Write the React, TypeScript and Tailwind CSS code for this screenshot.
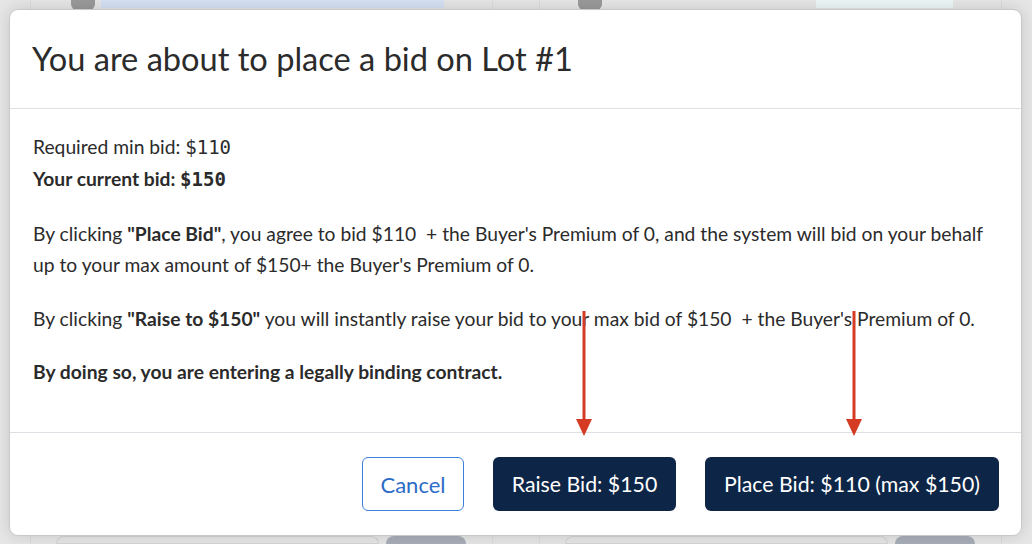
import React from "react";

const sans = { fontFamily: "Lato, 'Noto Sans', sans-serif" };
const mono = { fontFamily: "'DejaVu Sans Mono', monospace" };

function Arrow() {
  return (
    <svg width="20" height="126" viewBox="0 0 20 126" className="block">
      <line x1="10" y1="0" x2="10" y2="110" stroke="#d53a22" strokeWidth="3" />
      <polygon points="2,108 18,108 10,125" fill="#d53a22" />
    </svg>
  );
}

export default function App() {
  return (
    <div className="relative w-[1032px] h-[544px] overflow-hidden bg-[#e6e6e6]" style={sans}>
      {/* backdrop page */}
      <div className="grid grid-cols-2 gap-[46px] px-[30px] h-full">
        <div className="flex flex-col border-x border-[#dcdcdc] h-full">
          <div className="flex items-start gap-[6px] pl-[40px] pr-[48px]">
            <div className="w-[24px] h-[14px] rounded-b-md bg-[#9a9a9a] mt-[-4px]" />
            <div className="flex-1 h-[8px] bg-[#d5e2f4]" />
          </div>
          <div className="flex-1" />
          <div className="flex items-end gap-[7px] pl-[25px] pr-[26px]">
            <div className="flex-1 h-[8px] rounded-t-lg border border-[#d4d4d4]" />
            <div className="w-[80px] h-[8px] rounded-t-xl bg-[#a8aeb8]" />
          </div>
        </div>
        <div className="flex flex-col border-x border-[#dcdcdc] h-full">
          <div className="flex items-start pl-[38px] pr-[48px]">
            <div className="w-[24px] h-[14px] rounded-b-md bg-[#9a9a9a] mt-[-4px]" />
            <div className="flex-1" />
            <div className="w-[137px] h-[8px] bg-[#eef7f7]" />
          </div>
          <div className="flex-1" />
          <div className="flex items-end gap-[7px] pl-[25px] pr-[26px]">
            <div className="flex-1 h-[8px] rounded-t-lg border border-[#d4d4d4]" />
            <div className="w-[80px] h-[8px] rounded-t-xl bg-[#a8aeb8]" />
          </div>
        </div>
      </div>

      {/* modal */}
      <div className="absolute left-[9px] top-[9px] w-[1013px] h-[527px] bg-white rounded-[9px] border border-[#c9c9c9] shadow-[0_0_16px_rgba(0,0,0,0.14)] flex flex-col text-[#2b2b2b]">
        <div className="h-[99px] flex items-center pl-[22px] pr-6 border-b border-[#dcdfe3]">
          <h1 className="text-[32.6px] leading-none font-normal">
            You are about to place a bid on Lot #1
          </h1>
        </div>
        <div className="flex-1 pl-[23px] pr-6 pt-[22px] text-[19.25px] leading-[31px]">
          <p>
            Required min bid: <span style={mono} className="text-[19px]">$110</span>
          </p>
          <p className="font-bold mb-[23px]">
            Your current bid: <span style={mono} className="text-[19px]">$150</span>
          </p>
          <p className="mb-[23px]">
            By clicking <b>"Place Bid"</b>, you agree to bid $110&nbsp; + the Buyer's Premium of 0, and the system will bid on your behalf up to your max amount of $150+ the Buyer's Premium of 0.
          </p>
          <p className="mb-[22px]">
            By clicking <b>"Raise to $150"</b> you will instantly raise your bid to your max bid of $150&nbsp; + the Buyer's Premium of 0.
          </p>
          <p className="font-bold">By doing so, you are entering a legally binding contract.</p>
        </div>
        <div className="h-[103px] border-t border-[#dcdfe3] flex items-center justify-end gap-[29px] pr-[22px]">
          <button className="h-[54px] w-[102px] rounded-[6px] border border-[#3d7ed8] text-[#2c6cc7] text-[22px] bg-white pt-[1px]">
            Cancel
          </button>
          <button className="h-[54px] w-[183px] rounded-[6px] bg-[#0d2647] text-white text-[21.3px] pt-[2px]">
            Raise Bid: $150
          </button>
          <button className="h-[54px] w-[294px] rounded-[6px] bg-[#0d2647] text-white text-[21.3px] pt-[2px]">
            Place Bid: $110 (max $150)
          </button>
        </div>
      </div>

      {/* annotation arrows */}
      <div className="absolute left-[574px] top-[311px]"><Arrow /></div>
      <div className="absolute left-[844px] top-[311px]"><Arrow /></div>
    </div>
  );
}
